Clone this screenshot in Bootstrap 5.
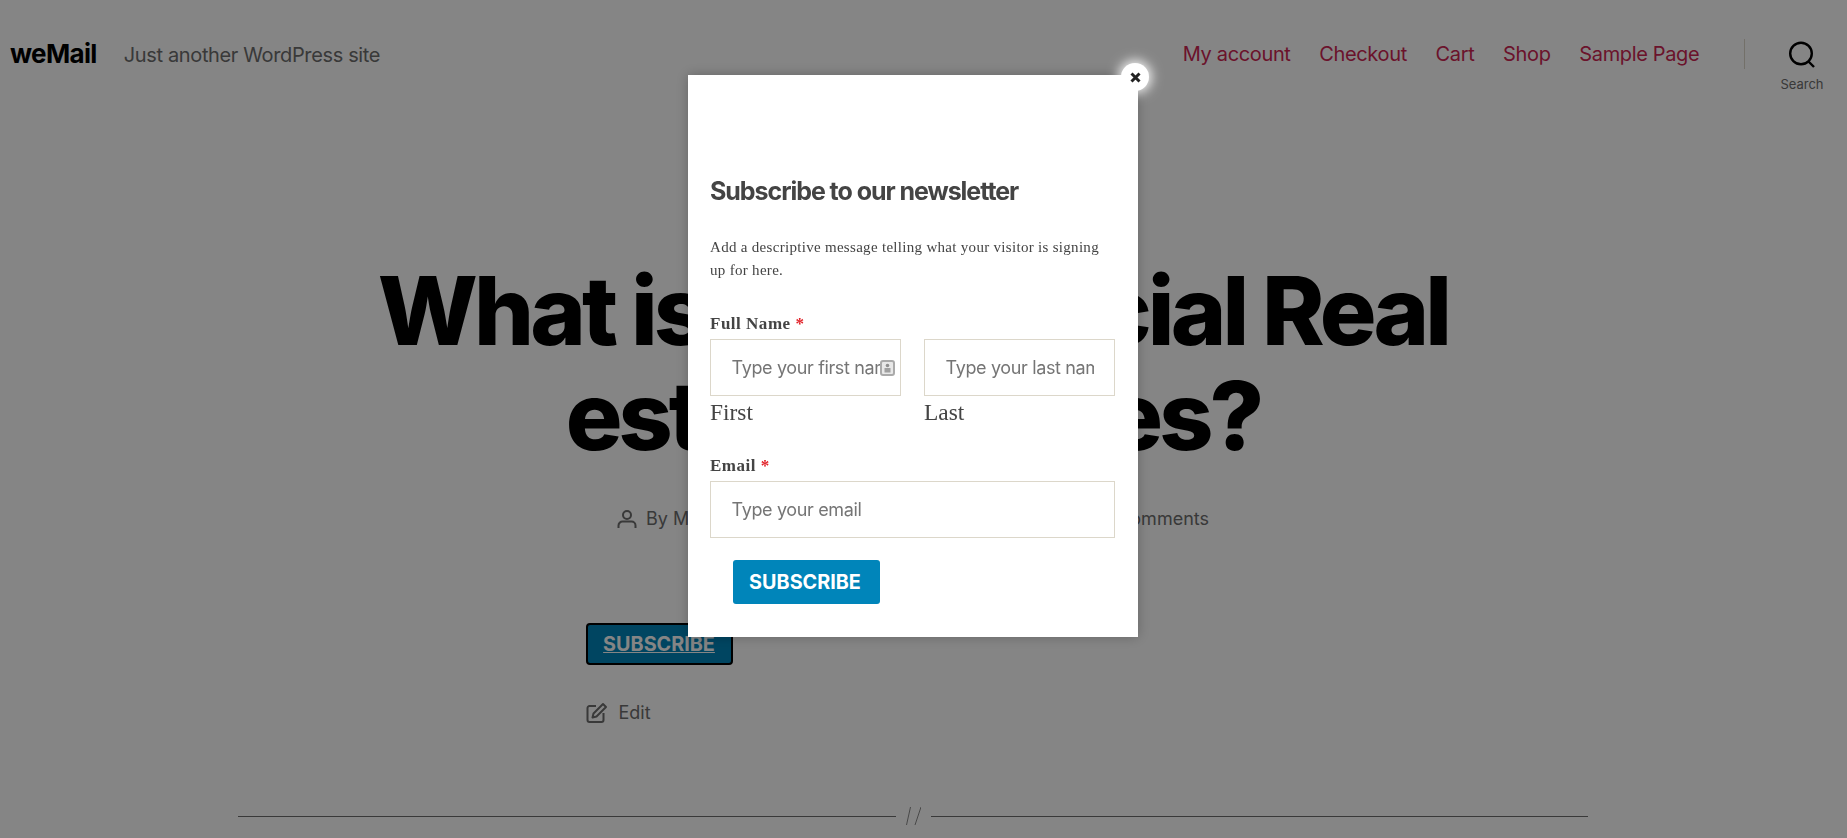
<!DOCTYPE html>
<html lang="en">
<head>
<meta charset="utf-8">
<title>weMail</title>
<link href="https://cdn.jsdelivr.net/npm/bootstrap@5.3.0/dist/css/bootstrap.min.css" rel="stylesheet">
<style>
html,body{height:838px;overflow:hidden}
body{font-family:Inter,"Liberation Sans",sans-serif;background:#fff;color:#000}
.site-head{padding:35px 0 0 10px;height:125px}
.brand-name{font-size:26px;font-weight:700;letter-spacing:-.025em;line-height:38px;margin-right:27px}
.brand-tag{font-size:20px;line-height:40px;color:#6d6d6d;letter-spacing:-.36px}
.top-link{font-size:20px;line-height:38px;color:#cd2653;text-decoration:none;margin-right:28.7px;letter-spacing:-.35px}
.head-sep{width:1px;height:30px;background:#dcd7ca;margin:4px 18px 0 16px}
.search-box{width:78px;margin-right:6px;margin-top:5px;font-size:13px;color:#6d6d6d;line-height:20px}
.search-box svg{display:block;margin:1px auto 6px}
.post-wrap{padding-right:21px}
.post-title{font-size:94.6px;font-weight:800;letter-spacing:-.0415em;line-height:105px;margin:133px 0 0;text-align:center}
.title-second{word-spacing:-26px}
.post-meta{width:592px;margin:38px auto 0;font-size:18px;color:#6d6d6d;line-height:26px}
.meta-author{gap:9px}
.post-body{height:274px}
.post-inner{width:655px;margin:0 auto}
.ghost-btn{display:inline-block;background:#0085ba;border:2px solid #000;border-radius:4px;color:#fff;font-size:19.8px;font-weight:700;line-height:38px;width:147px;text-align:center;text-decoration:underline;margin-top:91px}
.edit-row{margin-top:35px;font-size:18px;color:#6d6d6d;gap:11px;line-height:26px}
.split-rule{width:1350px;margin:0 auto;gap:10px;height:20px}
.split-rule i{display:block;flex:1;height:1px;background:#6d6d6d}
.dim-layer{position:fixed;inset:0;background:rgba(0,0,0,.48)}
.sub-box{position:absolute;left:688px;top:75px;width:450px;height:562px;background:#fff;padding:99px 22px 0;box-shadow:0 0 12px rgba(0,0,0,.25);color:#444}
.sub-close{position:absolute;right:-11px;top:-12px;width:28px;height:28px;border:0;border-radius:50%;background:#fff;box-shadow:0 0 11px 3px rgba(255,255,255,.85);padding:0;display:flex;align-items:center;justify-content:center}
.sub-title{font-family:Inter,sans-serif;font-size:25px;font-weight:700;letter-spacing:-.042em;line-height:34px;color:#444;margin:0 0 28px}
.sub-desc{font-family:"Liberation Serif",serif;font-size:15px;line-height:23px;letter-spacing:.3px;margin:0 0 32px;color:#444}
.sub-label{font-family:"Liberation Serif",serif;font-size:17px;font-weight:700;line-height:20px;letter-spacing:.03em;margin:0 0 5px;display:block;color:#444}
.sub-label b{color:#e2232a;font-weight:700}
.sub-field{font-family:Inter,sans-serif;height:57px;border:1px solid #dcd7ca;border-radius:0;padding:0 20.5px;font-size:18px;letter-spacing:-.36px;color:#444;background:#fff}
.sub-field::placeholder{color:#757575}
.sub-cols{gap:23px;margin-bottom:27px}
.sub-cols>div{width:191px}
.sub-small{font-family:"Liberation Serif",serif;font-size:23.4px;line-height:33px;display:block;color:#444}
.first-wrap{position:relative}
.card-mark{position:absolute;right:6px;top:21px}
.email-field{width:405px}
.sub-send{background:#0085ba;color:#fff;font-family:Inter,sans-serif;font-weight:700;font-size:19.8px;line-height:24px;border:0;border-radius:3px;width:147px;height:44px;padding:0 3px 0 0;margin:22px 0 0 23px}
</style>
</head>
<body>
<header class="site-head d-flex align-items-start">
  <div class="brand-name">weMail</div>
  <div class="brand-tag">Just another WordPress site</div>
  <nav class="d-flex ms-auto">
    <a class="top-link" href="#">My account</a>
    <a class="top-link" href="#">Checkout</a>
    <a class="top-link" href="#">Cart</a>
    <a class="top-link" href="#">Shop</a>
    <a class="top-link" href="#">Sample Page</a>
  </nav>
  <div class="head-sep"></div>
  <div class="search-box text-center">
    <svg width="28" height="27" viewBox="0 0 28 27" fill="none" stroke="#000" stroke-width="2.4"><circle cx="13" cy="12.500" r="10.800"/><path d="M20.500 20.500l5.500 5.500"/></svg>
    Search
  </div>
</header>
<main class="post-wrap">
  <h1 class="post-title">What is Commercial Real<br><span class="title-second">estate Services?</span></h1>
  <div class="post-meta d-flex justify-content-between">
    <span class="d-flex align-items-center meta-author"><svg width="20" height="20" viewBox="0 0 20 20" fill="none" stroke="#6d6d6d" stroke-width="2"><circle cx="10" cy="6" r="4"/><path d="M1.500 19v-2.500a4 4 0 0 1 4-4h9a4 4 0 0 1 4 4V19"/></svg>By Mahbub</span>
    <span>June 1, 2021</span>
    <span>No Comments</span>
  </div>
  <div class="post-body">
    <div class="post-inner">
      <a class="ghost-btn" href="#">SUBSCRIBE</a>
      <div class="edit-row d-flex align-items-center"><svg width="22" height="22" viewBox="0 0 22 22" fill="none" stroke="#6d6d6d" stroke-width="2" stroke-linejoin="round"><path d="M10 4H3.500A2 2 0 0 0 1.500 6v12a2 2 0 0 0 2 2h12a2 2 0 0 0 2-2v-7"/><path d="M17 2l3 3-9.500 9.500-4 1 1-4z"/></svg>Edit</div>
    </div>
  </div>
  <div class="split-rule d-flex align-items-center">
    <i></i>
    <svg width="15" height="18" viewBox="0 0 15 18" fill="none" stroke="#6d6d6d" stroke-width=".8"><path d="M4.500 0L.5 18M15 0l-6 18"/></svg>
    <i></i>
  </div>
</main>
<div class="dim-layer">
  <div class="sub-box">
    <button class="sub-close" type="button" aria-label="Close"><svg width="11" height="11" viewBox="0 0 11 11" stroke="#222" stroke-width="3"><path d="M1.500 1.500l8 8M9.500 1.500l-8 8"/></svg></button>
    <h2 class="sub-title">Subscribe to our newsletter</h2>
    <p class="sub-desc">Add a descriptive message telling what your visitor is signing up for here.</p>
    <label class="sub-label">Full Name <b>*</b></label>
    <div class="sub-cols d-flex">
      <div class="first-wrap">
        <input class="form-control sub-field" type="text" placeholder="Type your first name">
        <svg class="card-mark" width="15" height="16" viewBox="0 0 15 16"><rect x="1" y="1" width="13" height="14" rx="2" fill="#e8e8e8" stroke="#aaa" stroke-width="2"/><circle cx="7.500" cy="5.500" r="1.800" fill="#8f8f8f"/><rect x="4.500" y="8" width="6" height="4.500" fill="#a0a0a0"/></svg>
        <span class="sub-small">First</span>
      </div>
      <div>
        <input class="form-control sub-field" type="text" placeholder="Type your last name">
        <span class="sub-small">Last</span>
      </div>
    </div>
    <label class="sub-label">Email <b>*</b></label>
    <input class="form-control sub-field email-field" type="email" placeholder="Type your email">
    <button class="sub-send" type="button">SUBSCRIBE</button>
  </div>
</div>
</body>
</html>
